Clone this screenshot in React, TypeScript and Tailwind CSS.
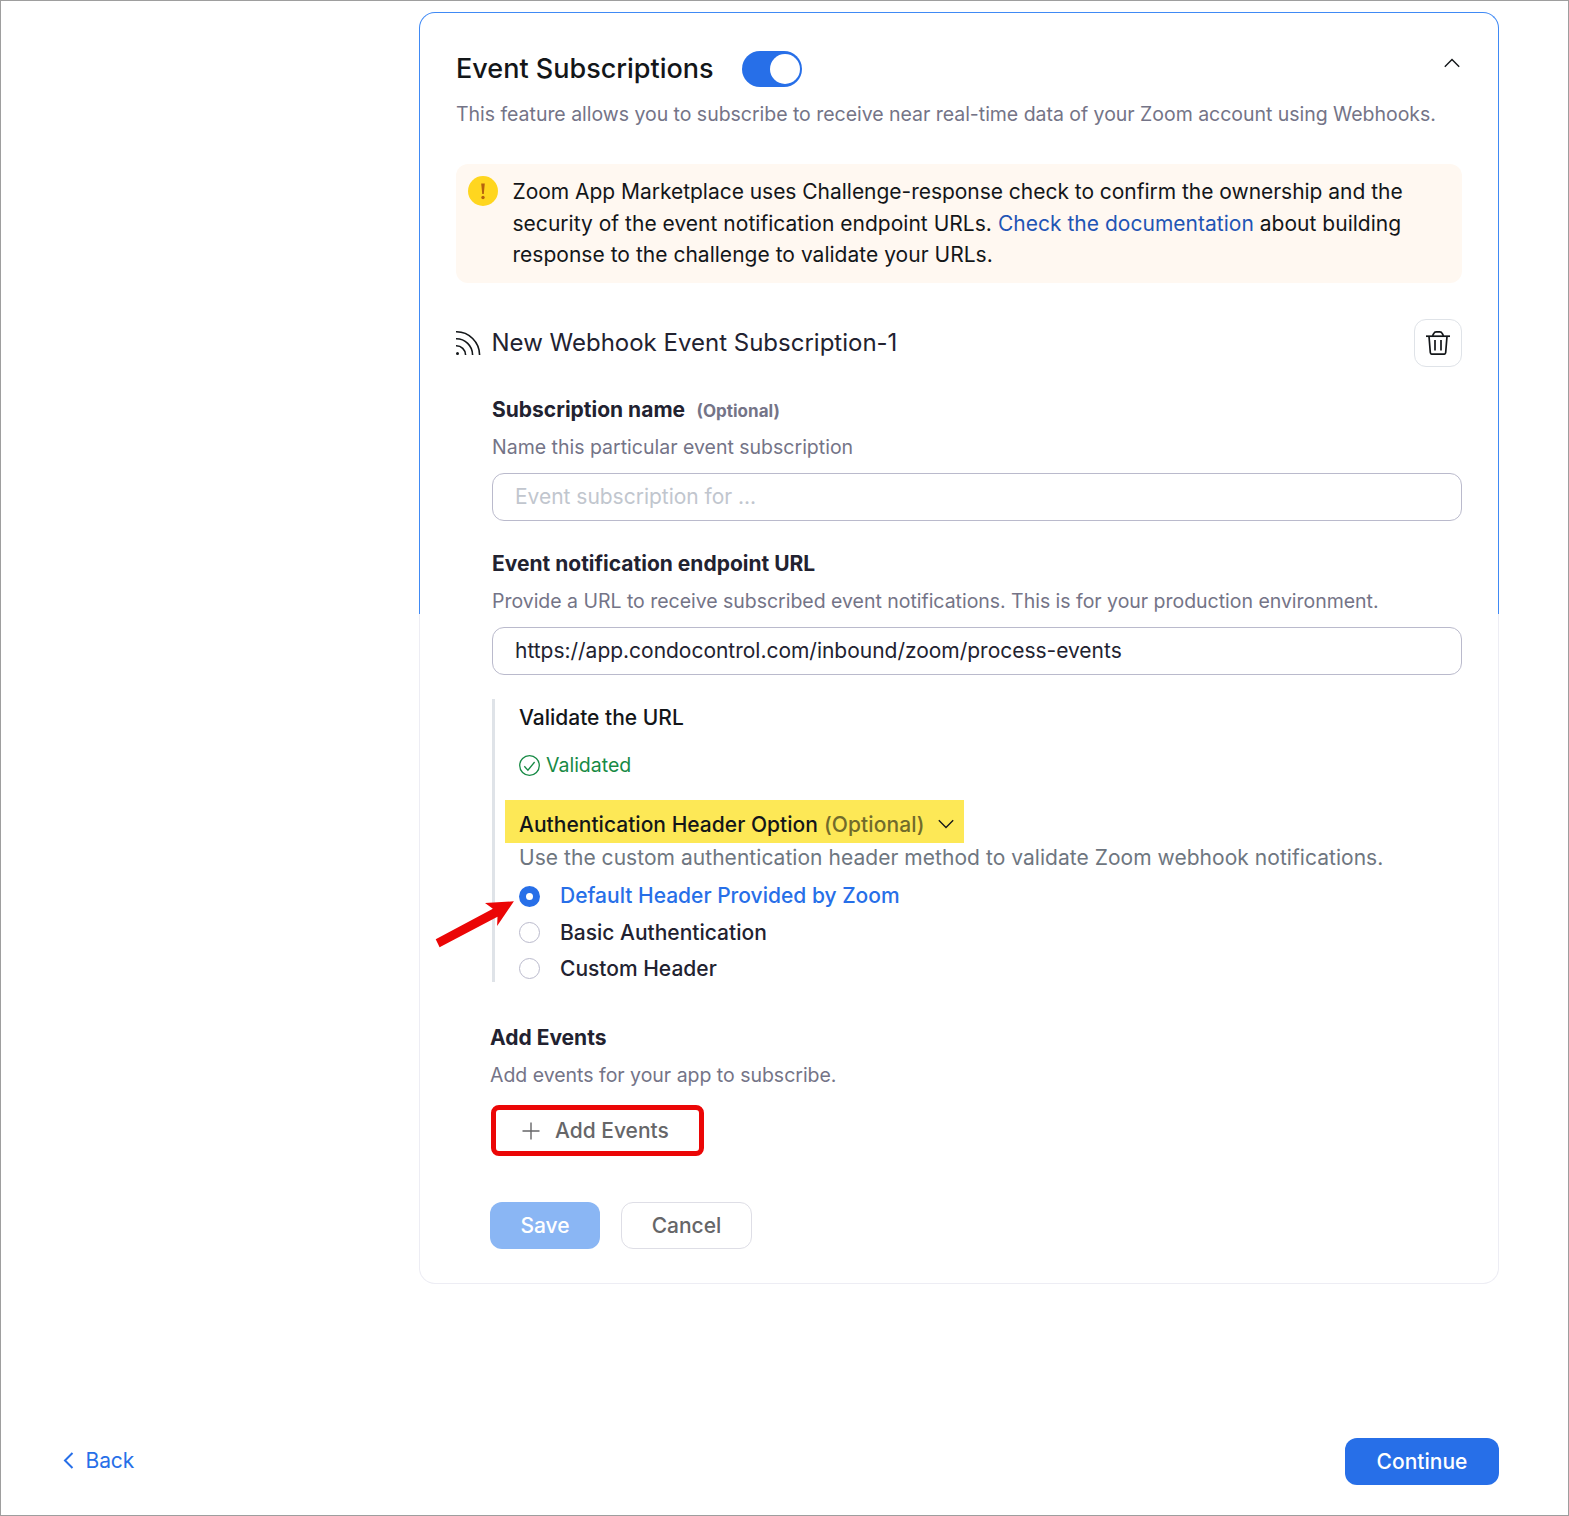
import React, { useState } from 'react';

const authOptions = ['Default Header Provided by Zoom', 'Basic Authentication', 'Custom Header'];

function WarningIcon() {
    return (
        <svg width="30" height="30" viewBox="0 0 30 30" className="shrink-0">
            <circle cx="15" cy="15" r="15" fill="#ffd61f" />
            <path d="M13.2 7.6h3.6l-1 10.4h-1.6z" fill="#b5620e" />
            <circle cx="15" cy="21.5" r="1.7" fill="#b5620e" />
        </svg>
    );
}

function FeedIcon() {
    return (
        <svg width="25" height="25" viewBox="0 0 25 25" fill="none" stroke="#131619" strokeWidth="1.6">
            <path d="M0 .8A23.3 23.3 0 0 1 23.6 24" />
            <path d="M0 7.8A16.3 16.3 0 0 1 16.6 24" />
            <path d="M0 14.8A9.3 9.3 0 0 1 9.6 24" />
            <circle cx="1.5" cy="22.5" r="1.5" fill="#131619" stroke="none" />
        </svg>
    );
}

function TrashIcon() {
    return (
        <svg width="24" height="24" viewBox="0 0 24 24" fill="none" stroke="#131619" strokeWidth="1.7">
            <path d="M0 5.2h24" />
            <path d="M6.5 5l1.3-2.5A2.6 2.6 0 0 1 10.2.9h3.6a2.6 2.6 0 0 1 2.4 1.6L17.5 5" />
            <path d="M3 5.2l1.3 16.3a1.9 1.9 0 0 0 1.9 1.7h11.6a1.9 1.9 0 0 0 1.9-1.7L21 5.2" />
            <path d="M9 9v10.5M15 9v10.5" />
        </svg>
    );
}

function CheckCircleIcon() {
    return (
        <svg width="21" height="21" viewBox="0 0 21 21" fill="none" stroke="#178a45" strokeWidth="1.3">
            <circle cx="10.5" cy="10.5" r="9.8" />
            <path d="M5.3 11.3l3.6 3.9L15.6 7" />
        </svg>
    );
}

export default function App() {
    const [enabled, setEnabled] = useState(true);
    const [name, setName] = useState('');
    const [url, setUrl] = useState('https://app.condocontrol.com/inbound/zoom/process-events');
    const [auth, setAuth] = useState(authOptions[0]);

    return (
        <div className="flex h-[1516px] w-[1569px] flex-col border border-[#9e9e9e] bg-white font-['Inter',sans-serif] text-[21px] leading-[30px] text-[#131619]">
            <div className="mt-[11px] ml-[418px] w-[1080px]">
                <section className="h-[602px] rounded-t-2xl border-x border-t border-[#408af5] px-9 pt-[38px]">
                    <div className="flex h-9 items-center">
                        <h1 className="w-[286px] text-[27px] font-medium">Event Subscriptions</h1>
                        <button
                            onClick={() => setEnabled(!enabled)}
                            className={`flex h-9 w-[60px] items-center rounded-full px-0.5 ${enabled ? 'justify-end bg-[#276fe8]' : 'justify-start bg-gray-300'}`}
                        >
                            <span className="h-[30px] w-[30px] rounded-full bg-white" />
                        </button>
                        <svg width="16" height="10" viewBox="0 0 16 10" fill="none" stroke="#131619" strokeWidth="1.4" className="mr-[2px] mb-3 ml-auto">
                            <path d="M.8 8.8L8 1.5l7.2 7.3" />
                        </svg>
                    </div>
                    <p className="mt-3 text-[19.5px] tracking-[-0.03px] text-[#747487]">
                        This feature allows you to subscribe to receive near real-time data of your Zoom account using Webhooks.
                    </p>

                    <div className="mt-[35px] flex h-[119px] gap-[14.5px] rounded-xl bg-[#fff8f1] p-3">
                        <WarningIcon />
                        <p className="leading-[31.5px] tracking-[0.02px]">
                            <span className="tracking-[-0.03px]">Zoom App Marketplace uses Challenge-response check to confirm the ownership and the</span><br />
                            security of the event notification endpoint URLs.{' '}
                            <a href="#" className="text-[#1f55b5]">Check the documentation</a> about building<br />
                            response to the challenge to validate your URLs.
                        </p>
                    </div>

                    <div className="mt-9 flex h-12 items-center">
                        <FeedIcon />
                        <h2 className="ml-[10.5px] text-2xl text-[#222230]">New Webhook Event Subscription-1</h2>
                        <button className="ml-auto flex h-12 w-12 items-center justify-center rounded-xl border border-[#dfe3e8]">
                            <TrashIcon />
                        </button>
                    </div>

                    <div className="pt-7 pl-9">
                        <label htmlFor="name" className="flex h-[30px] items-center font-bold text-[#222230]">
                            Subscription name
                            <span className="mt-px ml-[11.5px] text-[17px] font-bold text-[#747487]">(Optional)</span>
                        </label>
                        <p className="mt-[7px] text-[19.5px] text-[#747487]">Name this particular event subscription</p>
                        <input
                            type="text"
                            id="name"
                            value={name}
                            onChange={(e) => setName(e.target.value)}
                            placeholder="Event subscription for ..."
                            className="mt-[11px] block h-12 w-full rounded-xl border border-[#babacc] px-[22px] pb-0.5 tracking-[-0.02px] placeholder:text-[#c1c6ce]"
                        />
                        <label htmlFor="url" className="mt-7 block font-bold text-[#222230]">Event notification endpoint URL</label>
                        <p className="mt-[7px] text-[19.5px] tracking-[-0.025px] text-[#747487]">
                            Provide a URL to receive subscribed event notifications. This is for your production environment.
                        </p>
                    </div>
                </section>

                <section className="h-[670px] rounded-b-2xl border-x border-b border-[#ededf4] px-9 pt-[13px]">
                    <div className="pl-9">
                        <input
                            type="text"
                            id="url"
                            value={url}
                            onChange={(e) => setUrl(e.target.value)}
                            className="block h-12 w-full rounded-xl border border-[#babacc] px-[22px] pb-0.5 tracking-[-0.02px] text-[#222230]"
                        />

                        <div className="relative mt-6 h-[283px] border-l-[3px] border-[#dfe3e8] pt-1 pl-6">
                            <p className="font-medium">Validate the URL</p>
                            <div className="mt-[17px] flex items-center gap-1.5 text-[19.5px] text-[#178a45]">
                                <CheckCircleIcon />
                                Validated
                            </div>
                            <div className="mt-5 -ml-3.5 flex h-[43px] w-[459px] items-center bg-[#fde856] pt-1.5 pl-3.5 font-medium tracking-[0.02px]">
                                Authentication Header Option
                                <span className="ml-1.5 tracking-[0.1px] text-[#716b2b]">(Optional)</span>
                                <svg width="16" height="10" viewBox="0 0 16 10" fill="none" stroke="#131619" strokeWidth="1.3" className="mb-px ml-[13.5px]">
                                    <path d="M.8 1.2L8 8.5l7.2-7.3" />
                                </svg>
                            </div>
                            <p className="tracking-[0.04px] text-[#6e7680]">
                                Use the custom authentication header method to validate Zoom webhook notifications.
                            </p>
                            <div className="mt-[5px] font-medium text-[#222230]">
                                {authOptions.map(option => (
                                    <label key={option} className={`flex h-[36.35px] items-center gap-5 ${auth === option ? 'text-[#276fe8]' : ''}`}>
                                        <input
                                            type="radio"
                                            name="auth"
                                            checked={auth === option}
                                            onChange={() => setAuth(option)}
                                            className="h-[21px] w-[21px] appearance-none rounded-full border border-[#babacc] checked:border-[7.5px] checked:border-[#276fe8]"
                                        />
                                        {option}
                                    </label>
                                ))}
                            </div>
                            {/* callout arrow pointing at the default option */}
                            <svg width="80" height="48" viewBox="0 0 80 48" className="absolute top-[201px] left-[-60px]">
                                <path d="M.7 39.3l3.9 8L62.5 16.7l-.4 9.3L78.9 1.3 50 3l7.9 5.7z" fill="#eb0606" />
                            </svg>
                        </div>
                    </div>

                    <div className="mt-[41px] pl-[34px]">
                        <h3 className="font-bold text-[#222230]">Add Events</h3>
                        <p className="mt-[7px] text-[19.5px] tracking-[-0.02px] text-[#747487]">Add events for your app to subscribe.</p>
                        <button className="mt-[15px] ml-px flex h-[51px] w-[213px] items-center rounded-[8px] border-[5px] border-[#eb0606] pl-[26px] font-medium text-[#666668]">
                            <svg width="18" height="18" viewBox="0 0 18 18" stroke="#666668" strokeWidth="1.4">
                                <path d="M9 .5v17M.5 9h17" />
                            </svg>
                            <span className="ml-[15px]">Add Events</span>
                        </button>
                        <div className="mt-[46px] flex gap-[21px] font-medium">
                            <button className="h-[47px] w-[110px] rounded-xl bg-[#8ab6f4] text-white">Save</button>
                            <button className="h-[47px] w-[131px] rounded-xl border border-[#dedee6] text-[#666668]">Cancel</button>
                        </div>
                    </div>
                </section>
            </div>

            <footer className="mt-[154px] flex h-[47px] items-center justify-between pr-[69px] pl-[62px]">
                <a href="#" className="mb-0.5 flex items-center text-[#276fe8]">
                    <svg width="11" height="17" viewBox="0 0 11 17" fill="none" stroke="#276fe8" strokeWidth="2">
                        <path d="M9.5 1L2 8.5 9.5 16" />
                    </svg>
                    <span className="ml-[11.5px] tracking-[-0.1px]">Back</span>
                </a>
                <button className="h-[47px] w-[154px] rounded-xl bg-[#276fe8] font-medium text-white">Continue</button>
            </footer>
        </div>
    );
}
